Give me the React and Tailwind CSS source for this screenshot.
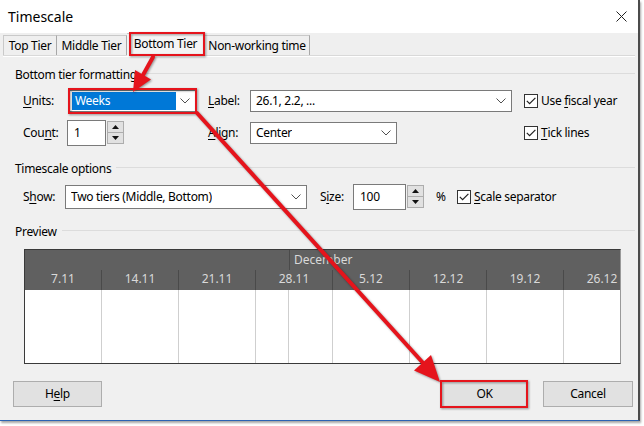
import React from 'react'

const U = ({ children }) => <span className="underline underline-offset-[2px] decoration-1">{children}</span>

const Chevron = () => (
  <svg width="10" height="6" viewBox="0 0 10 6" className="shrink-0">
    <path d="M0.5 0.5 L5 5 L9.5 0.5" fill="none" stroke="#505050" strokeWidth="1" />
  </svg>
)

const Combo = ({ className, children }) => (
  <div className={`flex items-center justify-between bg-white border border-[#7a7a7a] pl-[5px] pr-[5px] ${className}`}>
    <span className="truncate">{children}</span>
    <Chevron />
  </div>
)

const Spinner = ({ inputClass, value }) => (
  <div className="flex items-start">
    <div className={`h-[26px] bg-white border border-[#7a7a7a] flex items-center pl-[6px] ${inputClass}`}>{value}</div>
    <div className="ml-[1px] mt-[1px] w-[17px] h-[23px] flex flex-col">
      <div className="flex-1 bg-[#e1e1e1] border border-[#adadad] flex items-center justify-center">
        <svg width="7" height="4" viewBox="0 0 7 4"><path d="M0 4 L3.5 0 L7 4Z" fill="#111" /></svg>
      </div>
      <div className="flex-1 bg-[#e1e1e1] border border-t-0 border-[#adadad] flex items-center justify-center">
        <svg width="7" height="4" viewBox="0 0 7 4"><path d="M0 0 L3.5 4 L7 0Z" fill="#111" /></svg>
      </div>
    </div>
  </div>
)

const Check = ({ children, className = '' }) => (
  <div className={`flex items-center ${className}`}>
    <div className="w-[14px] h-[14px] bg-white border border-[#333] flex items-center justify-center">
      <svg width="10" height="8" viewBox="0 0 10 8">
        <path d="M0.8 3.8 L3.6 6.6 L9.4 0.8" fill="none" stroke="#222" strokeWidth="1.2" />
      </svg>
    </div>
    <span className="ml-[3px]">{children}</span>
  </div>
)

const Group = ({ title, className }) => (
  <div className={`flex items-center h-[16px] pl-[12px] ${className}`}>
    <span>{title}</span>
    <div className="flex-1 h-px bg-[#dcdcdc] ml-[5px] -mt-[3px]" />
  </div>
)

const Btn = ({ className, children }) => (
  <div className={`h-[26px] bg-[#e1e1e1] border flex items-center justify-center ${className}`}>{children}</div>
)

const weeks = ['7.11', '14.11', '21.11', '28.11', '5.12', '12.12', '19.12', '26.12']

export default function App() {
  return (
    <div className="relative w-[644px] h-[426px] bg-white overflow-hidden text-[12px] tracking-[-0.3px] text-black font-['Segoe_UI','Noto_Sans',sans-serif]">
      <div className="w-[640px] h-[421px] bg-[#f0f0f0] border-r-2 border-r-[#4b4b4b] border-b border-b-[#2b63b3] shadow-[1px_2px_2px_rgba(0,0,0,0.35)] flex flex-col">
        {/* title bar */}
        <div className="h-[33px] bg-white flex items-center pl-[8px] pr-[11px] shrink-0">
          <span className="text-[14px] tracking-normal">Timescale</span>
          <svg width="11" height="11" viewBox="0 0 11 11" className="ml-auto">
            <path d="M0.5 0.5 L10.5 10.5 M10.5 0.5 L0.5 10.5" stroke="#222" strokeWidth="1" />
          </svg>
        </div>

        {/* tabs */}
        <div className="h-[23px] shrink-0 flex items-end pl-[3px] pr-[3px] bg-[#efefef]">
          <div className="flex items-end h-full border-b border-[#d9d9d9]">
            <div className="w-[54px] h-[20px] flex items-center justify-center border border-b-0 border-[#c9c9c9] border-r-[#a8a8a8]">Top Tier</div>
            <div className="w-[70px] h-[20px] flex items-center justify-center border-t border-r border-[#c9c9c9] border-r-[#a8a8a8]">Middle Tier</div>
            <div className="w-[78px] h-[23px] -mb-px flex items-center justify-center bg-[#f4f4f4] border-t border-r border-[#c9c9c9] pb-[3px]">Bottom Tier</div>
            <div className="w-[105px] h-[20px] flex items-center justify-center border-t border-r border-[#c9c9c9] border-r-[#a8a8a8]">Non-working time</div>
          </div>
          <div className="flex-1 h-full border-b border-[#d9d9d9]" />
        </div>

        {/* panel */}
        <div className="mx-[3px] flex flex-col border-t border-white">
          <Group title="Bottom tier formatting" className="mt-[10px]" />

          <div className="mt-[7px] h-[22px] flex items-center pl-[20px]">
            <span className="w-[46px]"><U>U</U>nits:</span>
            <div className="w-[127px] h-[22px] flex items-center justify-between bg-white border border-[#7a7a7a] pl-[2px] pr-[5px]">
              <span className="w-[104px] h-[18px] bg-[#0078d7] text-white flex items-center pl-[3px]">Weeks</span>
              <Chevron />
            </div>
            <span className="ml-[12px] w-[42px]"><U>L</U>abel:</span>
            <Combo className="w-[262px] h-[22px]">26.1, 2.2, ...</Combo>
            <Check className="ml-[12px]">Use <U>f</U>iscal year</Check>
          </div>

          <div className="mt-[8px] h-[25px] flex items-center pl-[20px]">
            <span className="w-[44px]">Cou<U>n</U>t:</span>
            <Spinner inputClass="w-[39px]" value="1" />
            <span className="ml-[84px] w-[42px]"><U>A</U>lign:</span>
            <Combo className="w-[147px] h-[22px]">Center</Combo>
            <Check className="ml-[127px]"><U>T</U>ick lines</Check>
          </div>

          <Group title="Timescale options" className="mt-[16px]" />

          <div className="mt-[7px] h-[25px] flex items-center pl-[20px]">
            <span className="w-[42px]">S<U>h</U>ow:</span>
            <Combo className="w-[242px] h-[24px]">Two tiers (Middle, Bottom)</Combo>
            <span className="ml-[13px] w-[33px]">S<U>i</U>ze:</span>
            <Spinner inputClass="w-[53px]" value="100" />
            <span className="ml-[12px] w-[21px]">%</span>
            <Check><U>S</U>cale separator</Check>
          </div>

          <Group title="Preview" className="mt-[15px]" />

          {/* preview */}
          <div className="mt-[9px] ml-[21px] w-[597px] h-[115px] border border-[#3a3a3a] border-r-[#9a9a9a] bg-white flex flex-col overflow-hidden">
            <div className="h-[40px] bg-[#606060] text-[#d9d9d9] tracking-normal flex flex-col shrink-0">
              <div className="h-[20px] flex">
                <div className="w-[264px] shrink-0" />
                <div className="border-l border-[#4a4a4a] pl-[4px] flex items-center">December</div>
              </div>
              <div className="h-[20px] flex">
                {weeks.map((w, i) => (
                  <div
                    key={w}
                    className={`shrink-0 flex items-center justify-center pb-[3px] ${i === 0 ? 'w-[76px]' : 'w-[77px] border-l border-[#4a4a4a]'}`}
                  >
                    {w}
                  </div>
                ))}
              </div>
            </div>
            <div className="flex-1 flex">
              <div className="w-[76px] shrink-0" />
              <div className="w-[77px] shrink-0 border-l border-[#cfcfcf]" />
              <div className="w-[77px] shrink-0 border-l border-[#cfcfcf]" />
              <div className="w-[77px] shrink-0 border-l border-[#cfcfcf] flex">
                <div className="w-[33px] border-r border-[#cfcfcf]" />
              </div>
              <div className="w-[77px] shrink-0 border-l border-[#cfcfcf]" />
              <div className="w-[77px] shrink-0 border-l border-[#cfcfcf]" />
              <div className="w-[77px] shrink-0 border-l border-[#cfcfcf]" />
              <div className="w-[77px] shrink-0 border-l border-[#cfcfcf]" />
            </div>
          </div>
        </div>

        {/* buttons */}
        <div className="mt-[17px] flex items-center">
          <Btn className="ml-[13px] w-[89px] border-[#adadad]">H<U>e</U>lp</Btn>
          <Btn className="ml-[339px] w-[87px] border-[#0078d7]">OK</Btn>
          <Btn className="ml-[15px] w-[90px] border-[#adadad]">Cancel</Btn>
        </div>
      </div>

      {/* red annotations */}
      <svg
        width="644"
        height="426"
        viewBox="0 0 644 426"
        className="absolute inset-0 pointer-events-none drop-shadow-[1px_1px_1px_rgba(0,0,0,0.4)]"
      >
        <g fill="none" stroke="#e5141c" strokeWidth="2">
          <rect x="130" y="33" width="74" height="22" />
          <rect x="69" y="89" width="127" height="24" />
          <rect x="441" y="381" width="86" height="26" />
        </g>
        <g stroke="#e5141c" strokeWidth="4" strokeLinecap="round">
          <line x1="153" y1="57" x2="143" y2="75" />
          <line x1="197" y1="113" x2="424" y2="364" />
        </g>
        <g fill="#e5141c">
          <path d="M133 92 L151 79.5 L135 70 Z" />
          <path d="M440 382 L414 370.5 L431 355 Z" />
        </g>
      </svg>
    </div>
  )
}
